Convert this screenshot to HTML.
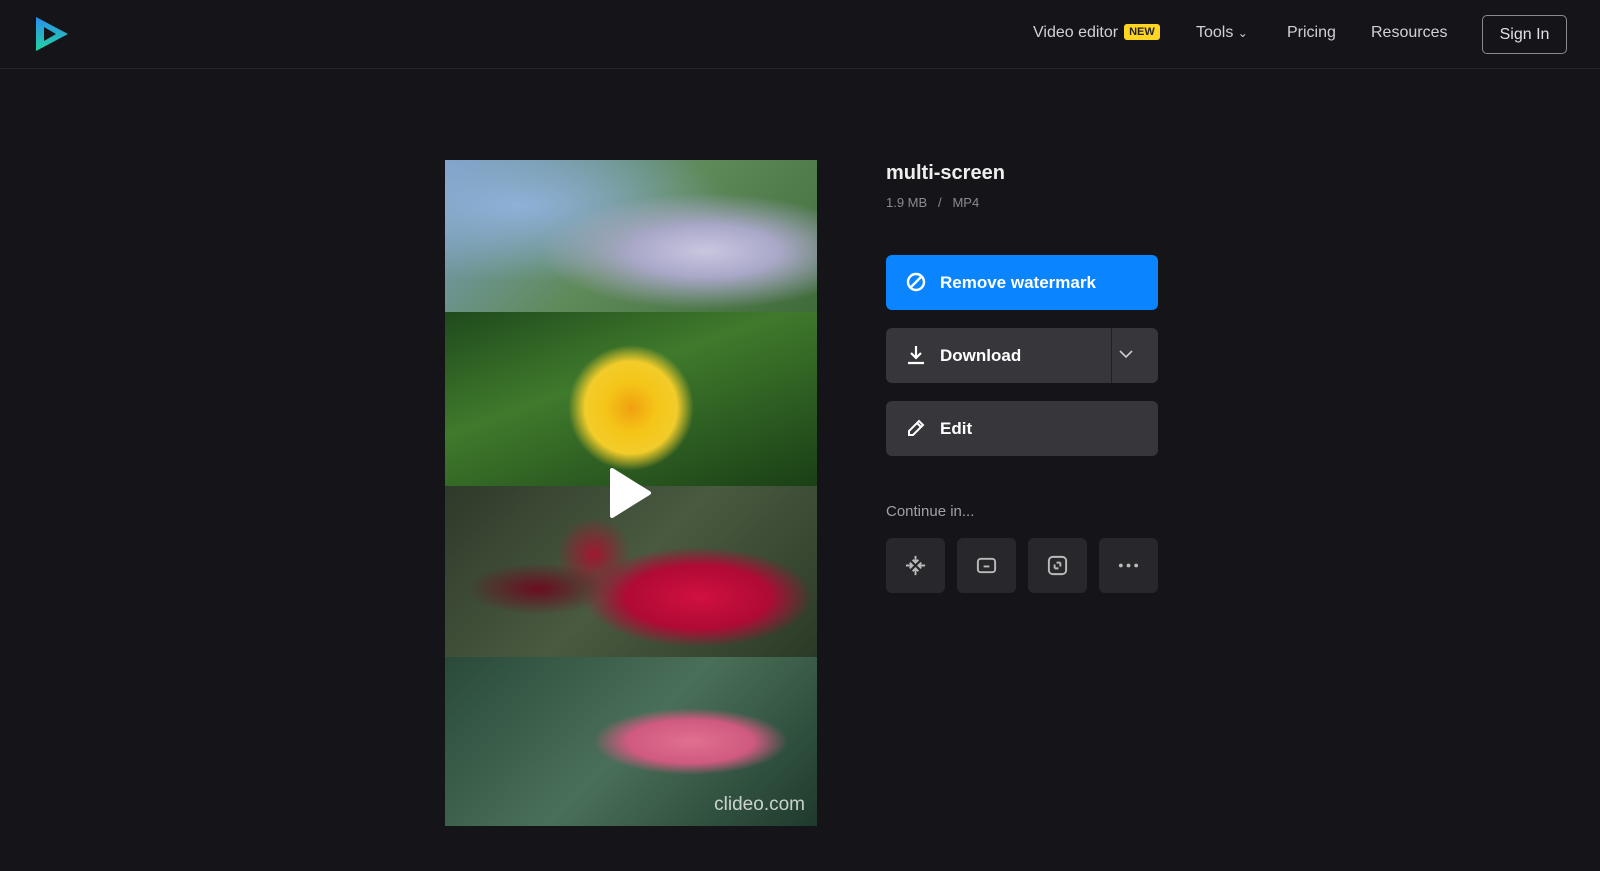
<!DOCTYPE html>
<html><head><meta charset="utf-8"><style>
*{margin:0;padding:0;box-sizing:border-box}
body{width:1600px;height:871px;background:#151519;font-family:"Liberation Sans",sans-serif;color:#fff;position:relative;overflow:hidden}
.hdr{position:absolute;left:0;top:0;width:1600px;height:69px;border-bottom:1px solid #26262b}
.nav{position:absolute;top:24px;font-size:16px;color:#d0d0d6}
.new{display:inline-block;background:#ffd524;color:#222;font-size:11px;font-weight:bold;padding:2px 5px;border-radius:3px;margin-left:6px;vertical-align:2px}
.sign{position:absolute;left:1482px;top:15px;width:85px;height:39px;border:1px solid #8a8a90;border-radius:5px;text-align:center;line-height:37px;font-size:16px;color:#e0e0e6}
.vid{position:absolute;left:445px;top:160px;width:372px;height:666px;overflow:hidden}
.s{position:absolute;left:0;width:372px}
.btn{position:absolute;left:886px;width:272px;height:55px;border-radius:6px;background:#36363b;font-size:17px;line-height:55px;padding-left:54px}
.btn svg{position:absolute;left:20px;top:17px}
.sm{position:absolute;top:538px;width:59px;height:55px;border-radius:6px;background:#27272c}
.sm svg{position:absolute;left:18px;top:16px}
</style></head><body>
<div class="hdr">
<svg style="position:absolute;left:34px;top:16px" width="36" height="36" viewBox="0 0 36 36"><defs><linearGradient id="g" x1="0" y1="0" x2="0" y2="1"><stop offset="0" stop-color="#2b8ff0"/><stop offset="1" stop-color="#21d4a0"/></linearGradient></defs><path d="M2 1 L34 18 L2 35 Z M10 11 L10 25 L22 18 Z" fill="url(#g)" fill-rule="evenodd"/></svg>
<div class="nav" style="left:1033px">Video editor<span class="new">NEW</span></div>
<div class="nav" style="left:1196px">Tools <span style="font-size:12px">&#8964;</span></div>
<div class="nav" style="left:1287px">Pricing</div>
<div class="nav" style="left:1371px">Resources</div>
<div class="sign">Sign In</div>
</div>
<div class="vid">
<div class="s" style="top:0;height:152px;background:radial-gradient(ellipse at 70% 60%,#c9c6e0 0,#a9a8c8 20%,transparent 45%),radial-gradient(ellipse at 20% 30%,#8fb0d8,transparent 50%),linear-gradient(135deg,#7c9fc9,#5f8a5a 50%,#3f6a3a)"></div>
<div class="s" style="top:152px;height:174px;background:radial-gradient(circle at 50% 55%,#f0a010 0,#f5c518 12%,#f2cc2a 22%,transparent 30%),linear-gradient(160deg,#1f4a1c,#3f7a2c 40%,#1a3f16)"></div>
<div class="s" style="top:326px;height:171px;background:radial-gradient(ellipse at 68% 65%,#d01040 0,#b00a35 20%,transparent 32%),radial-gradient(ellipse at 25% 60%,#6a0d20,transparent 18%),radial-gradient(circle at 40% 40%,#a01830,transparent 15%),linear-gradient(135deg,#2e3a2a,#4a5a40 50%,#2a3a26)"></div>
<div class="s" style="top:497px;height:169px;background:radial-gradient(ellipse at 66% 50%,#e07090 0,#d05a80 18%,transparent 28%),linear-gradient(135deg,#2a4a3a,#4a6f58 50%,#1e3a2c)"></div>
<svg style="position:absolute;left:163px;top:307px" width="44" height="52" viewBox="0 0 44 52"><path d="M4 3 L41 26 L4 49 Z" fill="#fff" stroke="#fff" stroke-width="4" stroke-linejoin="round"/></svg>
<div style="position:absolute;right:12px;bottom:10px;font-size:19px;color:rgba(255,255,255,.75)">clideo.com</div>
</div>
<div style="position:absolute;left:886px;top:162px;font-size:20px;font-weight:bold;color:#eee">multi-screen</div>
<div style="position:absolute;left:886px;top:195px;font-size:13px;color:#8a8a90">1.9 MB &nbsp;&nbsp;/&nbsp;&nbsp; MP4</div>
<div class="btn" style="top:255px;background:#0a84ff;font-weight:bold"><svg width="20" height="20" viewBox="0 0 20 20" fill="none" stroke="#fff" stroke-width="2.4"><circle cx="10" cy="10" r="8"/><path d="M5 15 L15 5"/></svg>Remove watermark</div>
<div class="btn" style="top:328px;font-weight:bold"><svg width="20" height="20" viewBox="0 0 20 20" fill="none" stroke="#fff" stroke-width="2.2"><path d="M10 1 V13 M5 8 L10 13 L15 8 M2 18 H18"/></svg>Download<div style="position:absolute;left:225px;top:0;width:1px;height:55px;background:#222226"></div><svg style="left:233px;top:21px" width="14" height="10" viewBox="0 0 14 10" fill="none" stroke="#ccc" stroke-width="1.6"><path d="M1 2 L7 8 L13 2"/></svg></div>
<div class="btn" style="top:401px;font-weight:bold"><svg width="20" height="20" viewBox="0 0 20 20" fill="none" stroke="#fff" stroke-width="2"><path d="M3 17 L3 13 L13 3 L17 7 L7 17 Z M11 5 L15 9"/></svg>Edit</div>
<div style="position:absolute;left:886px;top:503px;font-size:15px;color:#a0a0a6">Continue in...</div>
<div class="sm" style="left:886px"><svg width="23" height="23" viewBox="0 0 24 24" fill="none" stroke="#bbb" stroke-width="2"><path d="M12 2 V9 M9 6 L12 9 L15 6 M12 22 V15 M9 18 L12 15 L15 18 M2 12 H9 M6 9 L9 12 L6 15 M22 12 H15 M18 9 L15 12 L18 15"/></svg></div>
<div class="sm" style="left:957px"><svg width="23" height="23" viewBox="0 0 24 24" fill="none" stroke="#bbb" stroke-width="2"><rect x="3" y="5" width="18" height="14" rx="3"/><path d="M9 13 H15"/></svg></div>
<div class="sm" style="left:1028px"><svg width="23" height="23" viewBox="0 0 24 24" fill="none" stroke="#bbb" stroke-width="2"><rect x="3" y="3" width="18" height="18" rx="4"/><path d="M9 15 V11 M9 15 H13 M15 9 V13 M15 9 H11"/></svg></div>
<div class="sm" style="left:1099px"><svg width="23" height="23" viewBox="0 0 24 24" fill="#bbb"><circle cx="4" cy="12" r="2"/><circle cx="12" cy="12" r="2"/><circle cx="20" cy="12" r="2"/></svg></div>
</body></html>
